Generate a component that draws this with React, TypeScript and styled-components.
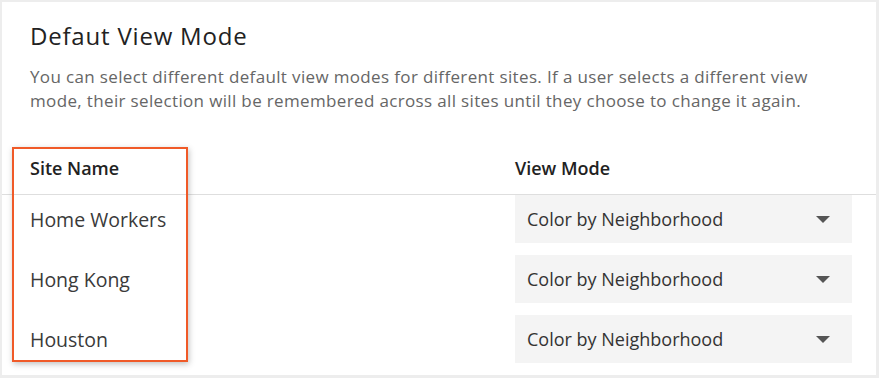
import React from 'react';
import styled, { createGlobalStyle } from 'styled-components';

const GlobalStyle = createGlobalStyle`
  html, body {
    margin: 0;
    padding: 0;
    background: #ededed;
  }
  body {
    font-family: "Open Sans", "Noto Sans", sans-serif;
  }
`;

const sites = ['Home Workers', 'Hong Kong', 'Houston'];

export default function App() {
  return (
    <>
      <GlobalStyle />
      <Page>
        <Card>
          <Intro>
            <Title>Defaut View Mode</Title>
            <Description>
              You can select different default view modes for different sites. If a user selects a different view
              mode, their selection will be remembered across all sites until they choose to change it again.
            </Description>
          </Intro>
          <Table>
            <HeaderRow>
              <HeaderCell>Site Name</HeaderCell>
              <HeaderCell>View Mode</HeaderCell>
            </HeaderRow>
            {sites.map((site) => (
              <Row key={site}>
                <SiteName>{site}</SiteName>
                <Select>
                  <span>Color by Neighborhood</span>
                  <Caret viewBox="0 0 14 7">
                    <path d="M0 0h14L7 7z" />
                  </Caret>
                </Select>
              </Row>
            ))}
          </Table>
          <Highlight />
        </Card>
      </Page>
    </>
  );
}

const Page = styled.div`
  width: 879px;
  height: 378px;
  padding: 2px 3px 3px 2px;
  box-sizing: border-box;
`;

const Card = styled.div`
  position: relative;
  height: 100%;
  background: #fff;
  display: flex;
  flex-direction: column;
`;

const Intro = styled.div`
  padding: 19px 24px 0 28px;
`;

const Title = styled.h1`
  margin: 0;
  font-size: 24px;
  line-height: 30px;
  font-weight: 500;
  letter-spacing: 0.8px;
  color: #222;
`;

const Description = styled.p`
  margin: 14px 0 0;
  font-size: 17px;
  line-height: 24px;
  letter-spacing: 0.35px;
  color: #666;
`;

const Table = styled.div`
  margin-top: 28px;
  display: flex;
  flex-direction: column;
`;

const HeaderRow = styled.div`
  display: grid;
  grid-template-columns: 485px 337px;
  padding: 0 24px 0 28px;
  height: 53px;
  align-items: center;
  border-bottom: 1px solid #dedede;
`;

const HeaderCell = styled.div`
  font-size: 18px;
  font-weight: 600;
  color: #222;
`;

const Row = styled.div`
  display: grid;
  grid-template-columns: 485px 337px;
  padding: 0 24px 0 28px;
  height: 48px;
  margin-bottom: 12px;
  align-items: center;
`;

const SiteName = styled.div`
  font-size: 19.5px;
  color: #3a3a3a;
`;

const Select = styled.div`
  height: 48px;
  background: #f4f4f4;
  display: flex;
  align-items: center;
  justify-content: space-between;
  padding: 0 22px 0 12px;
  font-size: 18px;
  color: #333;
`;

const Caret = styled.svg`
  width: 14px;
  height: 7px;
  fill: #555;
`;

const Highlight = styled.div`
  position: absolute;
  left: 10px;
  top: 145px;
  width: 172px;
  height: 211px;
  border: 2px solid #f05a28;
  box-shadow: 1px 2px 6px rgba(0, 0, 0, 0.25);
  pointer-events: none;
`;
